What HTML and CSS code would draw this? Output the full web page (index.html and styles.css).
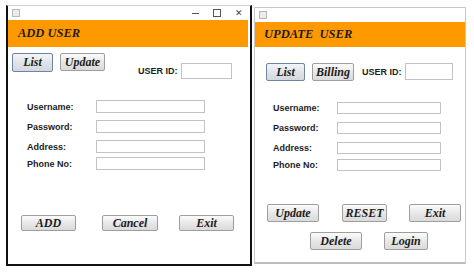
FILE: index.html
```html
<!DOCTYPE html>
<html lang="en">
<head>
  <meta charset="UTF-8">
  <title>User Forms</title>
  <link rel="stylesheet" href="styles.css">
</head>
<body>
  <div class="win win-add">
    <div class="titlebar">
      <span class="app-icon"></span>
      <div class="controls">
        <span class="ctl-min"></span>
        <span class="ctl-max"></span>
        <span class="ctl-close">&#x2715;</span>
      </div>
    </div>
    <div class="banner">ADD USER</div>
    <div class="toprow">
      <button class="btn btn-focus btn-list">List</button>
      <button class="btn btn-upd">Update</button>
      <div class="idbox">
        <label>USER ID:</label>
        <input type="text" class="field field-id">
      </div>
    </div>
    <div class="form">
      <div class="row"><label>Username:</label><input type="text" class="field"></div>
      <div class="row"><label>Password:</label><input type="text" class="field"></div>
      <div class="row"><label>Address:</label><input type="text" class="field"></div>
      <div class="row row-tight"><label>Phone No:</label><input type="text" class="field"></div>
    </div>
    <div class="actions">
      <button class="btn btn-add">ADD</button>
      <button class="btn btn-cancel">Cancel</button>
      <button class="btn btn-exit">Exit</button>
    </div>
  </div>

  <div class="win win-upd">
    <div class="titlebar">
      <span class="app-icon"></span>
    </div>
    <div class="banner">UPDATE&nbsp; USER</div>
    <div class="toprow">
      <button class="btn btn-focus btn-list">List</button>
      <button class="btn btn-bill">Billing</button>
      <div class="idbox">
        <label>USER ID:</label>
        <input type="text" class="field field-id">
      </div>
    </div>
    <div class="form">
      <div class="row"><label>Username:</label><input type="text" class="field"></div>
      <div class="row"><label>Password:</label><input type="text" class="field"></div>
      <div class="row"><label>Address:</label><input type="text" class="field"></div>
      <div class="row row-tight"><label>Phone No:</label><input type="text" class="field"></div>
    </div>
    <div class="actions">
      <button class="btn btn-u1">Update</button>
      <button class="btn btn-u2">RESET</button>
      <button class="btn btn-u3">Exit</button>
    </div>
    <div class="actions actions-2">
      <button class="btn btn-del">Delete</button>
      <button class="btn btn-login">Login</button>
    </div>
  </div>
</body>
</html>
```

FILE: styles.css
```css
body {
  margin: 0;
  background-color: #fff;
  display: flex;
  align-items: flex-start;
  padding: 5px 0 0 6px;
  font-family: 'Liberation Sans', Arial, sans-serif;
}

.win {
  box-sizing: border-box;
  background-color: #fff;
  display: flex;
  flex-direction: column;
}

.win-add {
  width: 246px;
  height: 261px;
  border: 2px solid #111;
  border-top: 1px solid #cfcfcf;
}

.win-upd {
  width: 212px;
  height: 257px;
  margin: 2px 0 0 2px;
  border: 1px solid #c9c9c9;
  border-bottom: 2px solid #bdbdbd;
}

.titlebar {
  height: 14px;
  display: flex;
  align-items: center;
}

.app-icon {
  width: 6px;
  height: 6px;
  border: 1px solid #b8b8b8;
  background-color: #ececec;
  margin-left: 4px;
}

.win-upd .app-icon {
  margin-left: 4px;
}

.controls {
  margin-left: auto;
  display: flex;
  align-items: center;
  gap: 14px;
  margin-right: 7px;
  color: #444;
}

.ctl-min {
  width: 7px;
  height: 1px;
  background-color: #555;
}

.ctl-max {
  width: 6px;
  height: 6px;
  border: 1px solid #555;
}

.ctl-close {
  font-size: 9px;
  line-height: 9px;
  color: #444;
}

.banner {
  background-color: #fe9a00;
  height: 27px;
  margin-right: 2px;
  padding-left: 10px;
  display: flex;
  align-items: center;
  font-family: 'Liberation Serif', 'Times New Roman', serif;
  font-weight: bold;
  font-style: italic;
  font-size: 12.5px;
  color: #1e1a14;
}

.win-upd .banner {
  height: 25px;
  margin-right: 0;
  padding-left: 9px;
}

.btn {
  box-sizing: border-box;
  height: 18px;
  padding: 0;
  border: 1px solid #9e9e9e;
  border-radius: 2px;
  background: linear-gradient(#fbfbfb, #e6e6e6 55%, #dadada);
  font-family: 'Liberation Serif', 'Times New Roman', serif;
  font-weight: bold;
  font-style: italic;
  font-size: 12px;
  color: #1c1c1c;
}

.btn-focus {
  border-color: #6f84a3;
  background: linear-gradient(#f3f5f8, #dfe3e9 55%, #d3d8df);
}

.toprow {
  display: flex;
  align-items: flex-start;
  margin-top: 6px;
  padding-left: 4px;
}

.win-add .btn-list {
  width: 41px;
  height: 19px;
}

.btn-upd {
  width: 45px;
  margin-left: 7px;
}

.idbox {
  display: flex;
  align-items: center;
  margin-top: 10px;
}

.win-add .idbox {
  margin-left: 33px;
}

label {
  font-size: 9px;
  font-weight: bold;
  color: #1d1d1d;
}

.idbox label {
  margin-right: 3px;
}

.field {
  box-sizing: border-box;
  margin: 0;
  padding: 0;
  height: 13px;
  border: 1px solid #c2c2c2;
  background-color: #fff;
  outline: none;
}

.field-id {
  width: 51px;
  height: 16px;
}

.form {
  margin-top: 21px;
  padding-left: 19px;
  display: flex;
  flex-direction: column;
  gap: 7px;
}

.row {
  display: flex;
  align-items: center;
}

.row label {
  width: 69px;
}

.row .field {
  width: 109px;
}

.row-tight {
  margin-top: -3px;
}

.actions {
  display: flex;
  margin-top: 45px;
  padding-left: 13px;
}

.btn-add,
.btn-cancel,
.btn-exit {
  width: 55px;
  height: 16px;
}

.btn-cancel {
  width: 56px;
  margin-left: 26px;
}

.btn-exit {
  margin-left: 21px;
}

/* update window */
.win-upd .toprow {
  margin-top: 16px;
  padding-left: 11px;
}

.win-upd .btn-list {
  width: 39px;
}

.btn-bill {
  width: 42px;
  margin-left: 7px;
}

.win-upd .idbox {
  margin-left: 8px;
  margin-top: 0;
  height: 17px;
}

.win-upd .field-id {
  width: 48px;
  height: 17px;
}

.win-upd .form {
  margin-top: 21px;
  padding-left: 18px;
  gap: 8px;
}

.win-upd .row label {
  width: 64px;
}

.win-upd .row .field {
  width: 104px;
  height: 12px;
}

.win-upd .actions {
  margin-top: 33px;
  padding-left: 12px;
}

.btn-u1 {
  width: 52px;
}

.btn-u2 {
  width: 45px;
  margin-left: 23px;
}

.btn-u3 {
  width: 52px;
  margin-left: 22px;
}

.win-upd .actions-2 {
  margin-top: 10px;
  padding-left: 55px;
}

.btn-del {
  width: 52px;
}

.btn-login {
  width: 44px;
  margin-left: 22px;
}
```
